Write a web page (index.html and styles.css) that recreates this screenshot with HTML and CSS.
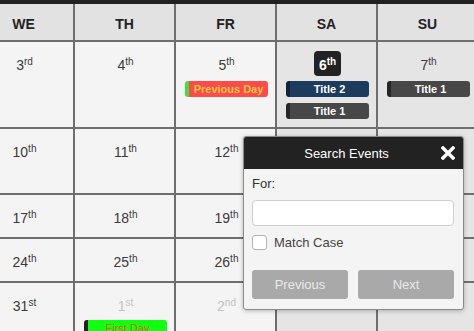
FILE: index.html
```html
<!DOCTYPE html>
<html>
<head>
<meta charset="utf-8">
<link rel="stylesheet" href="styles.css">
</head>
<body>
<div class="topbar"></div>
<div class="cal">
  <div class="head">WE</div>
  <div class="head">TH</div>
  <div class="head">FR</div>
  <div class="head">SA</div>
  <div class="head">SU</div>

  <div class="cell"><span class="num">3<sup>rd</sup></span></div>
  <div class="cell"><span class="num">4<sup>th</sup></span></div>
  <div class="cell"><span class="num">5<sup>th</sup></span>
    <div class="ev ev-red">Previous Day</div></div>
  <div class="cell wkend"><span class="num today">6<sup>th</sup></span>
    <div class="ev ev-blue">Title 2</div>
    <div class="ev ev-gray">Title 1</div></div>
  <div class="cell wkend"><span class="num">7<sup>th</sup></span>
    <div class="ev ev-gray">Title 1</div></div>

  <div class="cell"><span class="num">10<sup>th</sup></span></div>
  <div class="cell"><span class="num">11<sup>th</sup></span></div>
  <div class="cell"><span class="num">12<sup>th</sup></span></div>
  <div class="cell wkend"></div>
  <div class="cell wkend"></div>

  <div class="cell"><span class="num">17<sup>th</sup></span></div>
  <div class="cell"><span class="num">18<sup>th</sup></span></div>
  <div class="cell"><span class="num">19<sup>th</sup></span></div>
  <div class="cell wkend"></div>
  <div class="cell wkend"></div>

  <div class="cell"><span class="num">24<sup>th</sup></span></div>
  <div class="cell"><span class="num">25<sup>th</sup></span></div>
  <div class="cell"><span class="num">26<sup>th</sup></span></div>
  <div class="cell wkend"></div>
  <div class="cell wkend"></div>

  <div class="cell"><span class="num">31<sup>st</sup></span></div>
  <div class="cell"><span class="num other">1<sup>st</sup></span>
    <div class="ev ev-green">First Day</div></div>
  <div class="cell"><span class="num other">2<sup>nd</sup></span></div>
  <div class="cell wkend"></div>
  <div class="cell wkend"></div>
</div>

<div class="popup">
  <div class="popup-head">
    <span class="popup-title">Search Events</span>
    <span class="close"><svg width="14" height="14" viewBox="0 0 14 14"><path d="M2 2 L12 12 M12 2 L2 12" stroke="#fff" stroke-width="3.4" stroke-linecap="square"/></svg></span>
  </div>
  <div class="popup-body">
    <div class="label">For:</div>
    <div class="input"></div>
    <div class="check-row"><span class="check"></span><span class="check-label">Match Case</span></div>
    <div class="buttons">
      <div class="btn">Previous</div>
      <div class="btn">Next</div>
    </div>
  </div>
</div>
</body>
</html>
```
FILE: styles.css
```css
html, body {
  margin: 0;
  padding: 0;
}
body {
  width: 474px;
  height: 331px;
  overflow: hidden;
  background: #f4f4f4;
  font-family: "Liberation Sans", Arial, sans-serif;
  color: #333;
}
.topbar {
  height: 4px;
  background: #222;
}
.cal {
  display: grid;
  grid-template-columns: repeat(5, 101px);
  grid-template-rows: 38px 87px 66px 44px 44px 60px;
  margin-left: -26px;
  width: 505px;
}
.head, .cell {
  box-sizing: border-box;
  border-right: 2px solid #6e6e6e;
  border-bottom: 2px solid #6e6e6e;
}
.head {
  background: #e2e2e2;
  text-align: center;
  font-weight: bold;
  font-size: 14px;
  color: #222;
  padding-top: 4px;
  line-height: 32px;
}
.cell {
  background: #f4f4f4;
  padding: 9px 7px 0 9px;
  text-align: center;
}
.cell.wkend {
  background: #e5e5e5;
}
.num {
  display: inline-block;
  box-sizing: border-box;
  height: 25px;
  padding: 4px 5px 0;
  line-height: 21px;
  font-size: 14px;
  color: #3a3a3a;
  vertical-align: top;
}
.num sup {
  font-size: 10px;
  line-height: 0;
  vertical-align: 5px;
}
.num.today {
  background: #222;
  color: #fff;
  border-radius: 4px;
  font-weight: bold;
}
.num.other {
  color: #c2c2c2;
}
.ev {
  box-sizing: border-box;
  height: 16px;
  width: 83px;
  margin-top: 5px;
  border-radius: 3px;
  border-left: 4px solid #222;
  font-size: 11px;
  font-weight: bold;
  line-height: 16px;
  text-align: center;
  color: #fff;
}
.ev + .ev {
  margin-top: 6px;
}
.ev-red {
  background: #fb4b4b;
  border-left-color: #44dd44;
  color: #ffc640;
}
.ev-blue {
  background: #1d3b5c;
  border-left-color: #10243a;
}
.ev-gray {
  background: #474747;
  border-left-color: #262626;
}
.ev-green {
  margin-top: 3px;
  background: #11ff11;
  border-left-color: #222;
  color: #d06a00;
  font-weight: normal;
}
.popup {
  position: absolute;
  left: 243px;
  top: 136px;
  width: 221px;
  height: 174px;
  box-sizing: border-box;
  background: #f4f4f4;
  border: 1px solid #8a8a8a;
  border-radius: 3px;
  box-shadow: 0 1px 4px rgba(0,0,0,0.25);
  overflow: hidden;
}
.popup-head {
  display: flex;
  align-items: center;
  height: 32px;
  background: #222;
  padding: 0 8px 0 8px;
}
.popup-title {
  flex: 1;
  text-align: center;
  color: #fff;
  font-size: 13px;
}
.close {
  display: flex;
  width: 14px;
  height: 14px;
}
.popup-body {
  padding: 6px 9px 0 8px;
}
.label {
  font-size: 13px;
  line-height: 17px;
  color: #333;
}
.input {
  margin-top: 8px;
  height: 26px;
  box-sizing: border-box;
  background: #fff;
  border: 1px solid #cfcfcf;
  border-radius: 4px;
}
.check-row {
  display: flex;
  align-items: center;
  margin-top: 9px;
  height: 15px;
}
.check {
  width: 15px;
  height: 15px;
  box-sizing: border-box;
  background: #fff;
  border: 1px solid #b5b5b5;
  border-radius: 3px;
}
.check-label {
  margin-left: 7px;
  font-size: 13px;
  color: #444;
}
.buttons {
  display: flex;
  gap: 10px;
  margin-top: 20px;
}
.btn {
  flex: 1;
  height: 29px;
  line-height: 29px;
  background: #a9a9a9;
  border-radius: 3px;
  text-align: center;
  color: #e9e9e9;
  font-size: 13px;
}
```
